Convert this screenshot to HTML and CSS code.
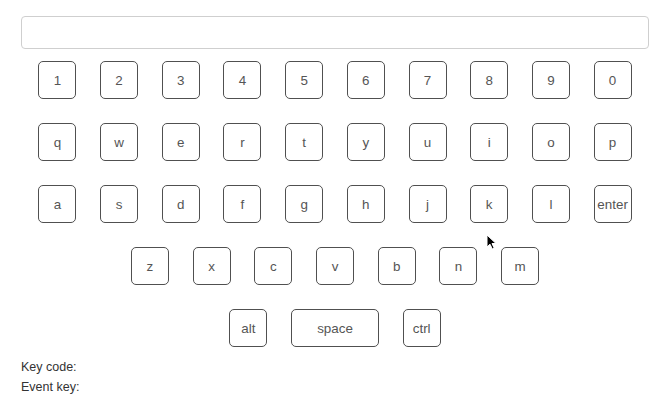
FILE: index.html
```html
<!DOCTYPE html>
<html>
<head>
<meta charset="utf-8">
<link rel="stylesheet" href="styles.css">
</head>
<body>
<div class="page">
  <div class="display"></div>
  <div class="keyboard">
    <div class="row">
      <div class="key">1</div><div class="key">2</div><div class="key">3</div><div class="key">4</div><div class="key">5</div><div class="key">6</div><div class="key">7</div><div class="key">8</div><div class="key">9</div><div class="key">0</div>
    </div>
    <div class="row">
      <div class="key">q</div><div class="key">w</div><div class="key">e</div><div class="key">r</div><div class="key">t</div><div class="key">y</div><div class="key">u</div><div class="key">i</div><div class="key">o</div><div class="key">p</div>
    </div>
    <div class="row">
      <div class="key">a</div><div class="key">s</div><div class="key">d</div><div class="key">f</div><div class="key">g</div><div class="key">h</div><div class="key">j</div><div class="key">k</div><div class="key">l</div><div class="key">enter</div>
    </div>
    <div class="row">
      <div class="key">z</div><div class="key">x</div><div class="key">c</div><div class="key">v</div><div class="key">b</div><div class="key">n</div><div class="key">m</div>
    </div>
    <div class="row">
      <div class="key">alt</div><div class="key wide">space</div><div class="key">ctrl</div>
    </div>
  </div>
  <div class="info">
    <div class="line">Key code:</div>
    <div class="line">Event key:</div>
  </div>
</div>
<svg class="cursor" width="12" height="16" viewBox="0 0 12 16">
  <path d="M1 1 L1 13 L4 10.2 L6.3 15 L8.2 14.1 L6 9.5 L10 9.5 Z" fill="#000" stroke="#fff" stroke-width="1"/>
</svg>
</body>
</html>
```
FILE: styles.css
```css
html, body {
  margin: 0;
  padding: 0;
  background: #fff;
}
body {
  font-family: "Liberation Sans", Arial, Helvetica, sans-serif;
  color: #333;
  position: relative;
  width: 666px;
  height: 404px;
  overflow: hidden;
}
.page {
  padding: 16px 17px 0 21px;
}
.display {
  width: 626px;
  height: 31px;
  border: 1px solid #cfcfcf;
  border-radius: 4px;
}
.keyboard {
  display: flex;
  flex-direction: column;
  gap: 24px;
  margin-top: 12px;
}
.row {
  display: flex;
  justify-content: center;
  gap: 23.7px;
  width: 628px;
}
.key {
  box-sizing: border-box;
  width: 38px;
  height: 38px;
  border: 1px solid #505050;
  border-radius: 5px;
  display: flex;
  align-items: center;
  justify-content: center;
  font-size: 13.4px;
  color: #555;
  white-space: nowrap;
}
.key.wide {
  width: 88px;
}
.info {
  margin-top: 10px;
  font-size: 12.5px;
  color: #333;
}
.line {
  line-height: 20px;
}
.cursor {
  position: absolute;
  left: 486px;
  top: 234px;
}
```
